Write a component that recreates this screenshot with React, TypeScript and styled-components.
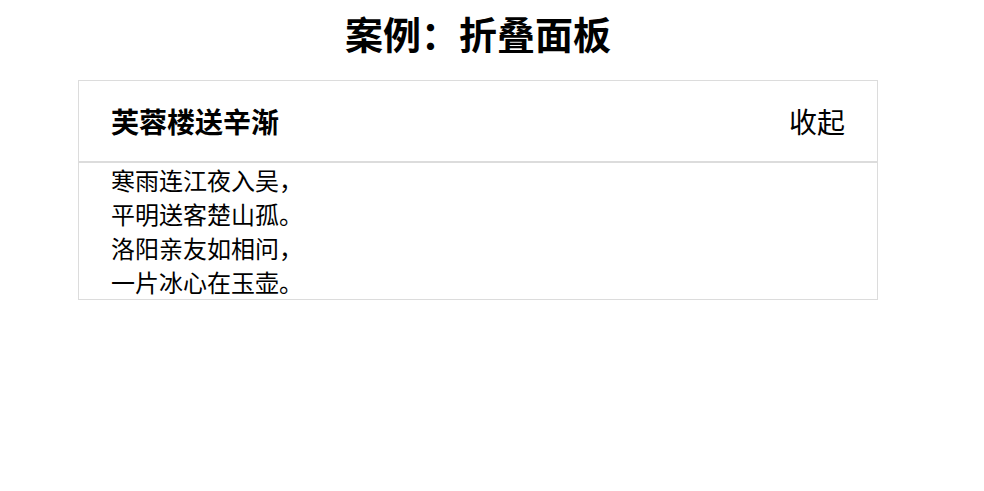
import { useState } from "react";
import styled, { createGlobalStyle } from "styled-components";

const poem = ["寒雨连江夜入吴，", "平明送客楚山孤。", "洛阳亲友如相问，", "一片冰心在玉壶。"];

export default function App() {
  const [open, setOpen] = useState(true);
  return (
    <>
      <GlobalStyle />
      <Page>
        <Heading>案例：折叠面板</Heading>
        <Panel>
          <Header>
            <Title>芙蓉楼送辛渐</Title>
            <Toggle onClick={() => setOpen(!open)}>{open ? "收起" : "展开"}</Toggle>
          </Header>
          {open && (
            <Content>
              {poem.map((line) => (
                <Line key={line}>{line}</Line>
              ))}
            </Content>
          )}
        </Panel>
      </Page>
    </>
  );
}

const GlobalStyle = createGlobalStyle`
  body {
    margin: 8px;
    background: #fff;
    color: #000;
    font-family: "Noto Sans CJK SC", "Noto Sans", sans-serif;
  }
`;

const Page = styled.div`
  width: 800px;
  margin-left: 70px;
`;

const Heading = styled.h1`
  margin: 0 0 22px;
  font-size: 38px;
  line-height: 50px;
  font-weight: bold;
  text-align: center;
`;

const Panel = styled.div`
  border: 1px solid #dcdcdc;
`;

const Header = styled.div`
  display: flex;
  align-items: center;
  justify-content: space-between;
  height: 80px;
  padding: 0 32px;
  border-bottom: 2px solid #dcdcdc;
`;

const Title = styled.h3`
  margin: 0;
  font-size: 28px;
  font-weight: bold;
`;

const Toggle = styled.span`
  font-size: 28px;
  cursor: pointer;
`;

const Content = styled.div`
  padding: 0 32px;
`;

const Line = styled.p`
  margin: 0;
  font-size: 24px;
  line-height: 34px;
`;
